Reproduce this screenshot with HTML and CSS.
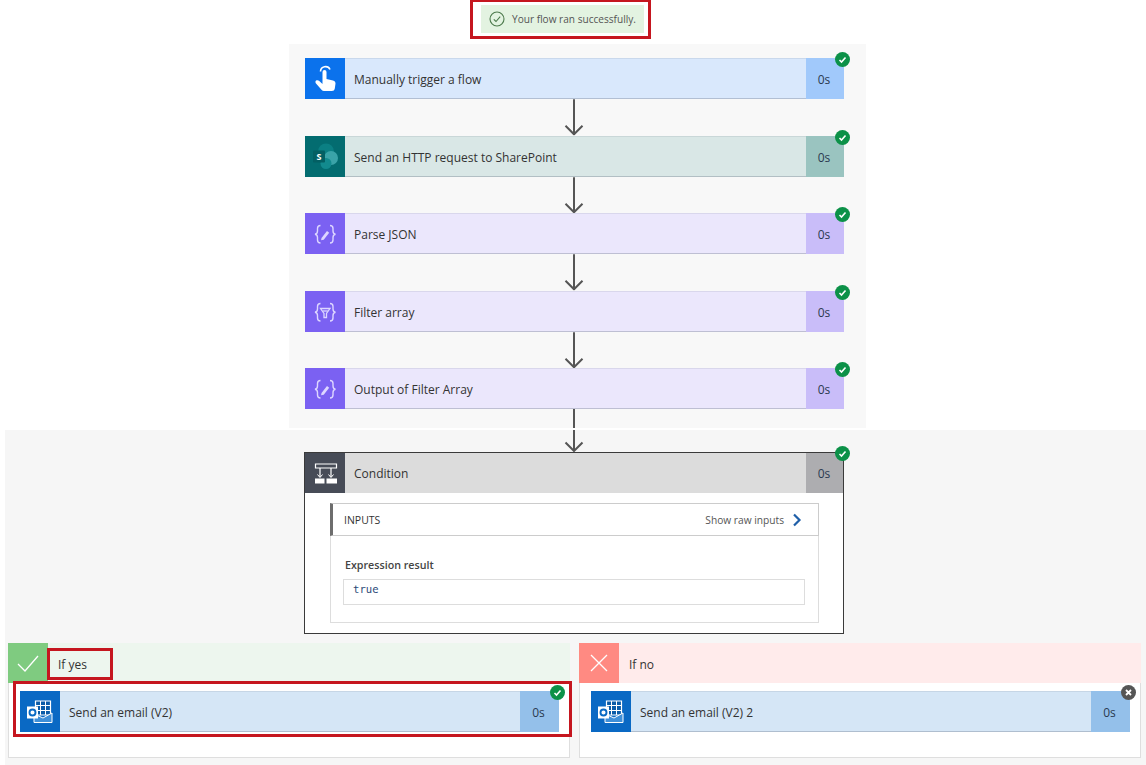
FILE: index.html
```html
<!DOCTYPE html>
<html lang="en">
<head>
<meta charset="utf-8">
<title>Flow run</title>
<link rel="stylesheet" href="styles.css">
</head>
<body>
<svg class="defs" aria-hidden="true">
  <symbol id="i-touch" viewBox="0 0 40 40">
    <path d="M15.500 13a5 5 0 0 1 9.500-2" fill="none" stroke="#fff" stroke-width="1.600"/>
    <path d="M17.500 13.500a2 2 0 0 1 4 0v7l6.500 1.500c1.600.4 2.500 1.500 2.500 3l-.7 5c-.3 1.700-1.300 2.500-3 2.500H19c-1 0-1.800-.4-2.500-1.200L11 25c-.8-1-.7-2.200.1-2.900.9-.7 2-.6 2.900.2l3.500 3.300z" fill="#fff"/>
  </symbol>
  <symbol id="i-json" viewBox="0 0 40 40">
    <path d="M15.500 12c-2.500 0-3 1.300-3 3v2.500c0 2-.8 3-2.500 3.300 1.700.3 2.500 1.300 2.500 3.300V26.500c0 1.700.5 3 3 3M25 12c2.500 0 3 1.300 3 3v2.500c0 2 .8 3 2.500 3.300-1.700.3-2.500 1.300-2.500 3.300V26.500c0 1.700-.5 3-3 3" fill="none" stroke="#ddd6ff" stroke-width="1.400"/>
    <path d="M16.500 24.500l5.500-7 2.200 1.700-5.500 7-2.600.6z" fill="#ddd6ff"/>
  </symbol>
  <symbol id="i-filter" viewBox="0 0 40 40">
    <path d="M15.500 12c-2.500 0-3 1.300-3 3v2.500c0 2-.8 3-2.500 3.300 1.700.3 2.500 1.300 2.500 3.300V26.500c0 1.700.5 3 3 3M25 12c2.500 0 3 1.300 3 3v2.500c0 2 .8 3 2.500 3.300-1.700.3-2.500 1.300-2.500 3.300V26.500c0 1.700-.5 3-3 3" fill="none" stroke="#ddd6ff" stroke-width="1.400"/>
    <path d="M15.500 17h9.500l-3.500 5v4h-2.500v-4z" fill="none" stroke="#ddd6ff" stroke-width="1.300"/>
    <path d="M17.800 19.500h5" stroke="#ddd6ff" stroke-width="1.300"/>
  </symbol>
  <symbol id="i-cond" viewBox="0 0 40 40">
    <path d="M10.500 10.500h21v4h-21zM15 14.500v9M26 14.500v9" fill="none" stroke="#fff" stroke-width="1.200"/>
    <path d="M12.500 21l2.500 3 2.500-3M23.500 21l2.500 3 2.500-3" fill="none" stroke="#fff" stroke-width="1"/>
    <path d="M10 25h9.500v5H10zM21.500 25H32v5H21.500z" fill="#fff"/>
  </symbol>
  <symbol id="i-mail" viewBox="0 0 40 40">
    <path d="M15.500 9.500h15v14h-15z" fill="#0a5ba8" stroke="#fff" stroke-width="1.200"/>
    <path d="M20.500 9.500v14M25.500 9.500v14M15.500 14h15M15.500 19h15" stroke="#fff" stroke-width="1"/>
    <path d="M14 22.500l9 4 9-5V31H14z" fill="#3f8fd8" stroke="#fff" stroke-width="1"/>
    <rect x="7" y="15" width="11" height="12" fill="#fff"/>
    <circle cx="12.500" cy="21" r="3" fill="none" stroke="#0a6ac4" stroke-width="1.900"/>
  </symbol>
  <symbol id="i-arrow" viewBox="0 0 20 36">
    <path d="M10 0v35M1.500 26.500L10 35l8.500-8.500" fill="none" stroke="#555" stroke-width="2"/>
  </symbol>
  <symbol id="i-ok" viewBox="0 0 15 15">
    <circle cx="7.500" cy="7.500" r="7.500" fill="#0c9148"/>
    <path d="M4.500 8l2 2 4-4.500" fill="none" stroke="#fff" stroke-width="1.600"/>
  </symbol>
  <symbol id="i-skip" viewBox="0 0 15 15">
    <circle cx="7.500" cy="7.500" r="7.500" fill="#555"/>
    <path d="M5 5l5 5M10 5l-5 5" fill="none" stroke="#fff" stroke-width="1.800"/>
  </symbol>
</svg>

<main class="page">
  <div class="banner-row">
    <div class="banner-frame">
      <div class="banner">
        <svg class="banner-icon" viewBox="0 0 16 16"><circle cx="8" cy="8" r="7" fill="none" stroke="#4c7a4c" stroke-width="1.100"/><path d="M4.800 8.300l2.200 2.200 4.200-4.800" fill="none" stroke="#4c7a4c" stroke-width="1.100"/></svg>
        <span>Your flow ran successfully.</span>
      </div>
    </div>
  </div>

  <section class="panel-top">
    <article class="card card-blue">
      <div class="card-icon"><svg><use href="#i-touch"/></svg></div>
      <div class="card-title">Manually trigger a flow</div>
      <div class="card-time">0s</div>
      <svg class="status"><use href="#i-ok"/></svg>
    </article>
    <svg class="arrow"><use href="#i-arrow"/></svg>
    <article class="card card-teal">
      <div class="card-icon">
        <svg viewBox="0 0 40 40">
          <circle cx="21" cy="15" r="8" fill="#0b7f83"/>
          <circle cx="26" cy="21.500" r="7" fill="#3aa3a8"/>
          <circle cx="21" cy="27" r="5.500" fill="#128a8e"/>
          <rect x="8" y="14" width="12" height="12" rx="1" fill="#035f63"/>
          <text x="14" y="23.500" class="sp-letter">S</text>
        </svg>
      </div>
      <div class="card-title">Send an HTTP request to SharePoint</div>
      <div class="card-time">0s</div>
      <svg class="status"><use href="#i-ok"/></svg>
    </article>
    <svg class="arrow"><use href="#i-arrow"/></svg>
    <article class="card card-violet">
      <div class="card-icon"><svg><use href="#i-json"/></svg></div>
      <div class="card-title">Parse JSON</div>
      <div class="card-time">0s</div>
      <svg class="status"><use href="#i-ok"/></svg>
    </article>
    <svg class="arrow"><use href="#i-arrow"/></svg>
    <article class="card card-violet">
      <div class="card-icon"><svg><use href="#i-filter"/></svg></div>
      <div class="card-title">Filter array</div>
      <div class="card-time">0s</div>
      <svg class="status"><use href="#i-ok"/></svg>
    </article>
    <svg class="arrow"><use href="#i-arrow"/></svg>
    <article class="card card-violet">
      <div class="card-icon"><svg><use href="#i-json"/></svg></div>
      <div class="card-title">Output of Filter Array</div>
      <div class="card-time">0s</div>
      <svg class="status"><use href="#i-ok"/></svg>
    </article>
    <div class="line-out"></div>
  </section>

  <section class="panel-bottom">
    <svg class="arrow-in" viewBox="0 0 20 22"><path d="M10 0v21M1.500 12.500L10 21l8.500-8.500" fill="none" stroke="#555" stroke-width="2"/></svg>
    <div class="condition">
      <article class="card card-grey">
        <div class="card-icon"><svg><use href="#i-cond"/></svg></div>
        <div class="card-title">Condition</div>
        <div class="card-time">0s</div>
        <svg class="status"><use href="#i-ok"/></svg>
      </article>
      <div class="inputs">
        <div class="inputs-head">
          <span class="inputs-label">INPUTS</span>
          <span class="inputs-raw">Show raw inputs</span>
          <svg class="chevron" viewBox="0 0 10 14"><path d="M2 1.500L7.500 7 2 12.500" fill="none" stroke="#1f5fa8" stroke-width="2.200"/></svg>
        </div>
        <div class="inputs-body">
          <div class="field-label">Expression result</div>
          <div class="field-value">true</div>
        </div>
      </div>
    </div>

    <div class="branches">
      <div class="branch branch-yes">
        <div class="branch-head">
          <div class="branch-icon"><svg viewBox="0 0 40 40"><path d="M10 21l7 7 13-15" fill="none" stroke="#fff" stroke-width="1.300"/></svg></div>
          <div class="branch-title">If yes</div>
        </div>
        <article class="card card-mail">
          <div class="card-icon"><svg><use href="#i-mail"/></svg></div>
          <div class="card-title">Send an email (V2)</div>
          <div class="card-time">0s</div>
          <svg class="status"><use href="#i-ok"/></svg>
        </article>
        <div class="mark mark-title"></div>
        <div class="mark mark-card"></div>
      </div>
      <div class="branch branch-no">
        <div class="branch-head">
          <div class="branch-icon"><svg viewBox="0 0 40 40"><path d="M12 12l16 16M28 12L12 28" fill="none" stroke="#fff" stroke-width="1.300"/></svg></div>
          <div class="branch-title">If no</div>
        </div>
        <article class="card card-mail">
          <div class="card-icon"><svg><use href="#i-mail"/></svg></div>
          <div class="card-title">Send an email (V2) 2</div>
          <div class="card-time">0s</div>
          <svg class="status"><use href="#i-skip"/></svg>
        </article>
      </div>
    </div>
  </section>
</main>
</body>
</html>
```
FILE: styles.css
```css
* { box-sizing: border-box; }
html, body { margin: 0; padding: 0; background: #fff; }
body {
  width: 1146px;
  height: 765px;
  overflow: hidden;
  font-family: "Open Sans", "Noto Sans", sans-serif;
  font-size: 12px;
  color: #333;
}
.defs { position: absolute; width: 0; height: 0; overflow: hidden; }
.sp-letter { font: 700 9px "Open Sans", sans-serif; fill: #fff; text-anchor: middle; }

.page { display: flex; flex-direction: column; height: 765px; }

.banner-row { height: 44px; padding-left: 470px; }
.banner-frame {
  width: 181px;
  height: 39px;
  border: 3px solid #c5161f;
  border-top-width: 2px;
  padding: 3px 4px 3px 8px;
  background: #fff;
}
.banner {
  height: 100%;
  display: flex;
  align-items: center;
  padding-left: 8px;
  gap: 7px;
  background: #e3f3e1;
  font-size: 10.1px;
  color: #555;
}
.banner-icon { width: 16px; height: 16px; flex: none; }

.panel-top {
  margin-left: 289px;
  width: 577px;
  height: 384px;
  padding: 14px 22px 0 16px;
  background: #f8f8f8;
  display: flex;
  flex-direction: column;
}
.arrow { display: block; width: 20px; height: 36.5px; margin-left: 259px; flex: none; }
.line-out { width: 2px; height: 19px; background: #555; margin-left: 268px; }

.card {
  position: relative;
  display: flex;
  flex: none;
  width: 539px;
  height: 41px;
  align-items: stretch;
  border-bottom: 1px solid rgba(90, 100, 120, .3);
  border-top: 1px solid rgba(90, 100, 120, .12);
}
.card-icon { width: 40px; flex: none; margin: -1px 0; }
.card-icon svg { display: block; width: 40px; height: 41px; }
.card-title { flex: 1; padding-left: 9px; line-height: 41px; font-size: 12px; white-space: nowrap; }
.card-time { width: 38px; flex: none; margin: -1px 0; padding-right: 2px; line-height: 43px; text-align: center; font-size: 12px; color: #2a3a50; }
.status { position: absolute; right: -6px; top: -7px; width: 15px; height: 15px; }

.card-blue { background: #d9e8fc; }
.card-blue .card-icon { background: #0b72ec; }
.card-blue .card-time { background: #a1c9fb; }
.card-teal { background: #d9e7e6; }
.card-teal .card-icon { background: #036c70; }
.card-teal .card-time { background: #9ac4c0; }
.card-violet { background: #ebe7fc; }
.card-violet .card-icon { background: #7b61f2; }
.card-violet .card-time { background: #c9bdf9; }
.card-grey { background: #dcdcdc; width: 538px; height: 40px; border: 0; }
.card-grey .card-icon { background: #474c57; margin: 0; }
.card-grey .card-time { background: #adadb0; margin: 0; width: 37px; padding-right: 1px; line-height: 42px; }
.card-grey .card-title { line-height: 42px; }
.card-mail { background: #d5e6f6; }
.card-mail .card-icon { background: #0a69c4; }
.card-mail .card-time { background: #94c0ea; width: 39px; }

.panel-bottom {
  margin: 2px 0 0 5px;
  flex: 1;
  background: #f6f6f6;
  display: flex;
  flex-direction: column;
}
.arrow-in { display: block; width: 20px; height: 22px; margin-left: 559px; flex: none; }

.condition {
  width: 540px;
  height: 182px;
  margin-left: 299px;
  border: 1px solid #3a3a3a;
  background: #fff;
}
.card-grey .status { right: -7px; top: -7px; }

.inputs { margin: 10px 24px 0 25px; height: 120px; display: flex; flex-direction: column; }
.inputs-head {
  height: 33px;
  flex: none;
  display: flex;
  align-items: center;
  padding-left: 11px;
  padding-right: 16px;
  border: 1px solid #ccc;
  border-left: 3px solid #6d6d6d;
}
.inputs-label { flex: 1; font-size: 10.5px; color: #333; }
.inputs-raw { font-size: 10.2px; color: #555; margin-right: 8px; }
.chevron { width: 10px; height: 14px; }
.inputs-body {
  flex: 1;
  border: 1px solid #ddd;
  border-top: 0;
  padding: 21px 13px 0 12px;
}
.field-label { font-size: 10.7px; font-weight: 600; color: #444; line-height: 16px; padding-left: 2px; margin-bottom: 6px; }
.field-value {
  height: 26px;
  border: 1px solid #ddd;
  padding-left: 9px;
  font-family: "DejaVu Sans Mono", "Liberation Mono", monospace;
  font-size: 10.6px;
  line-height: 18px;
  color: #2b4a78;
}

.branches { display: flex; gap: 9px; margin: 9px 0 0 3px; }
.branch {
  position: relative;
  width: 562px;
  height: 115px;
  background: #fff;
  border: 1px solid #dedede;
  border-top: 0;
}
.branch-head { display: flex; height: 40px; margin: 0 0 8px -1px; }
.branch-icon { width: 40px; flex: none; }
.branch-icon svg { display: block; width: 40px; height: 40px; }
.branch-title { padding-left: 10px; line-height: 43px; font-size: 12px; }
.branch .card { margin-left: 11px; }
.branch-yes .branch-head { background: #edf6ee; margin-right: -1px; }
.branch-yes .branch-icon { background: #7fcb80; }
.branch-no .branch-head { background: #ffebeb; margin-right: -1px; }
.branch-no .branch-icon { background: #ff8a82; }

.mark { position: absolute; border: 3px solid #c5161f; pointer-events: none; }
.mark-title { left: 38px; top: 5px; width: 66px; height: 32px; }
.mark-card { left: 4px; top: 38px; width: 559px; height: 56px; }
```
